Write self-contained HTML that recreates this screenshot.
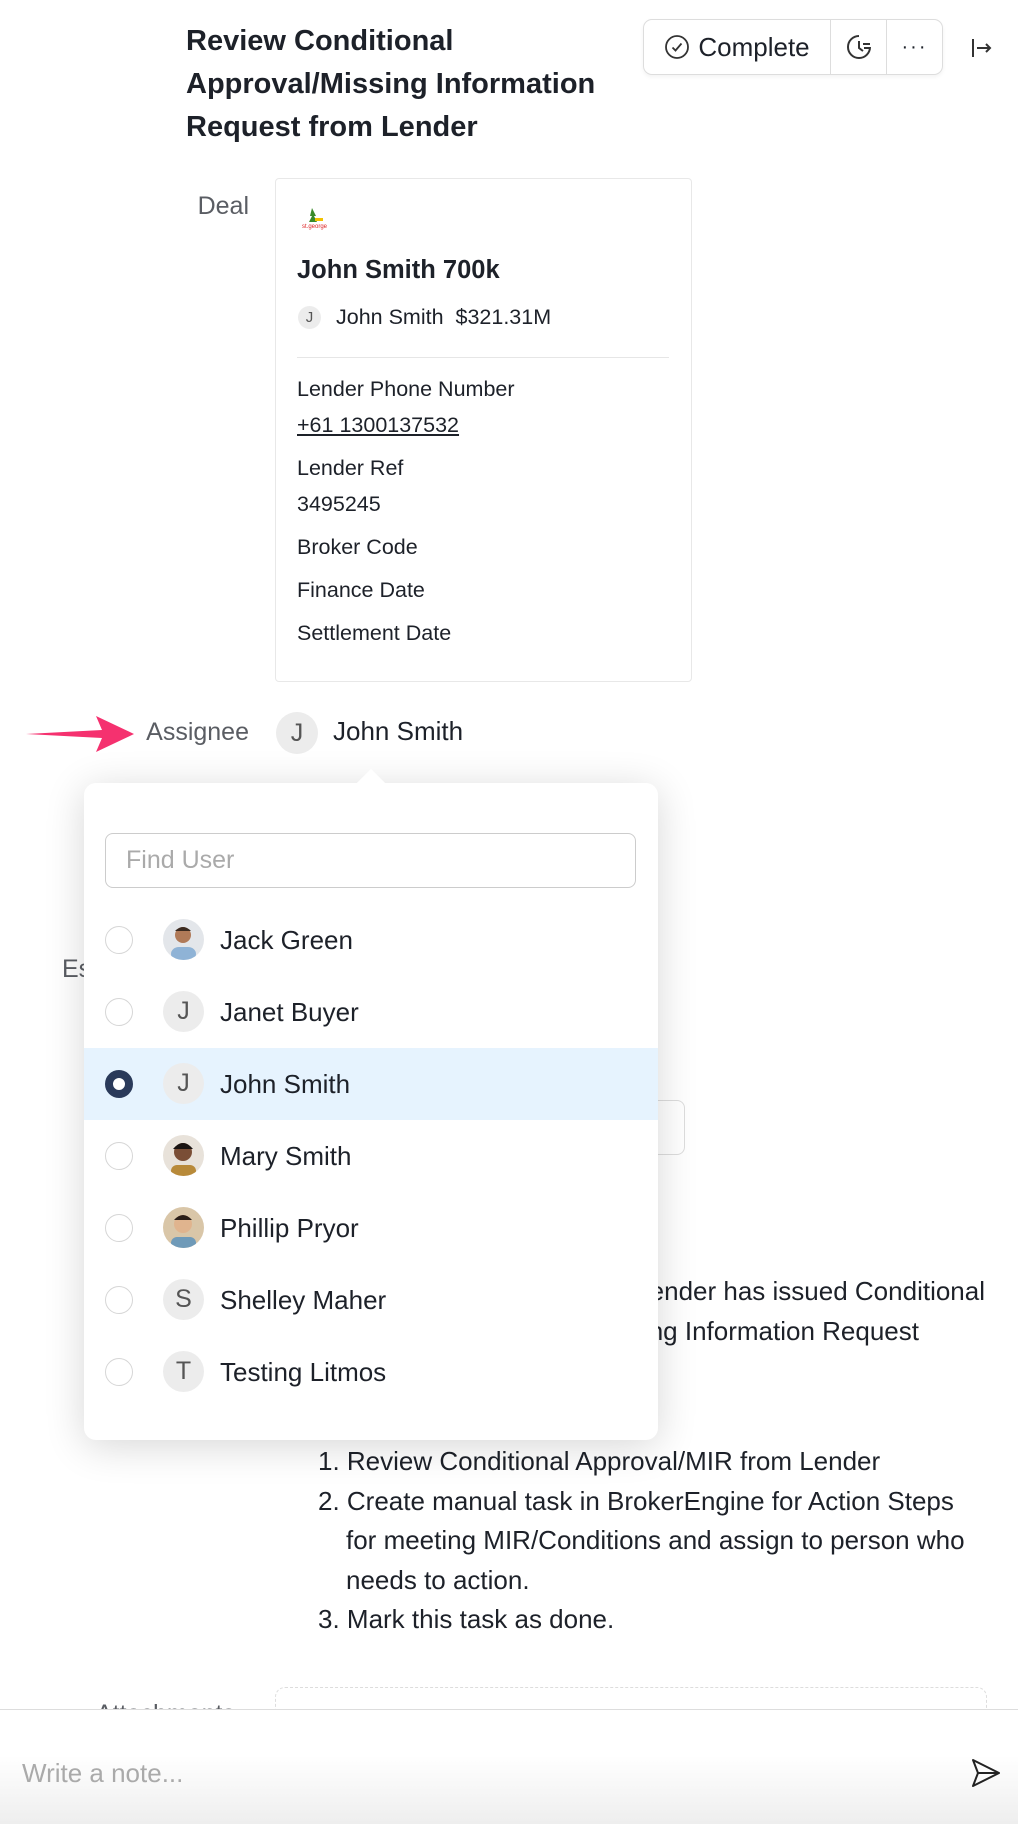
<!DOCTYPE html>
<html><head><meta charset="utf-8"><style>
*{box-sizing:border-box;margin:0;padding:0}
body{width:1018px;height:1824px;position:relative;background:#fff;font-family:"Liberation Sans",sans-serif;color:#1d2129;overflow:hidden}
.a{position:absolute;white-space:nowrap}
.title{left:186px;top:20px;font-size:29px;font-weight:bold;line-height:43px;white-space:normal;width:470px}
.btns{left:643px;top:19px;width:300px;height:56px;border:1px solid #ddd;border-radius:9px;display:flex;box-shadow:0 2px 4px rgba(0,0,0,.05)}
.btns div{display:flex;align-items:center;justify-content:center;border-right:1px solid #ddd}
.lbl{font-size:25px;color:#5a5d63;text-align:right;width:200px}
.card{left:275px;top:178px;width:417px;height:504px;border:1px solid #e8e8e8;border-radius:4px}
.ct{font-size:21.5px;left:297px}
.av{border-radius:50%;background:#ececec;color:#555;display:flex;align-items:center;justify-content:center}
.pop{left:84px;top:783px;width:574px;height:657px;background:#fff;border-radius:12px;box-shadow:0 6px 40px rgba(0,0,0,.16)}
.row{position:absolute;left:0;width:574px;height:72px}
.rad{position:absolute;left:21px;top:22px;width:28px;height:28px;border-radius:50%;border:1.5px solid #d6d6d6}
.rav{position:absolute;left:79px;top:15px;width:41px;height:41px;font-size:25px;overflow:hidden}
.nm{position:absolute;left:136px;top:21px;font-size:26px}
.li{font-size:26px;left:318px}
</style></head><body>
<div class="a title">Review Conditional Approval/Missing Information Request from Lender</div>
<div class="a btns">
 <div style="width:187px;font-size:26px;gap:8px"><svg width="26" height="26" viewBox="0 0 26 26"><circle cx="13" cy="13" r="11" fill="none" stroke="#333" stroke-width="1.8"/><path d="M8.5 13.5l3 3 6-7" fill="none" stroke="#333" stroke-width="1.8"/></svg>Complete</div>
 <div style="width:56px"><svg width="28" height="28" viewBox="0 0 28 28"><path d="M14 3a11 11 0 1 0 11 11" fill="none" stroke="#333" stroke-width="2"/><path d="M14 8v7l4 3" fill="none" stroke="#333" stroke-width="2"/><path d="M18 11h7M19 15h6" stroke="#333" stroke-width="2"/></svg></div>
 <div style="width:55px;border-right:none;font-size:20px;letter-spacing:2px">···</div>
</div>
<svg class="a" style="left:971px;top:37px" width="22" height="22" viewBox="0 0 22 22"><path d="M2 2v18M6 11h13M15 7l4 4-4 4" fill="none" stroke="#333" stroke-width="2"/></svg>

<div class="a lbl" style="left:49px;top:192px">Deal</div>
<div class="a card"></div>
<div class="a" style="left:302px;top:206px;width:28px;height:24px"><svg width="28" height="24"><path d="M10 2l4 8-2 0 3 6h-8l3-6h-2z" fill="#3a8a2a"/><rect x="13" y="12" width="8" height="3" fill="#f2c200"/><text x="0" y="22" font-size="6" fill="#d22" font-family="Liberation Sans">st.george</text></svg></div>
<div class="a ct" style="top:256px;font-size:25.5px;font-weight:bold">John Smith 700k</div>
<div class="a av" style="left:298px;top:306px;width:23px;height:23px;font-size:15px">J</div>
<div class="a ct" style="left:336px;top:305px">John Smith&nbsp;&nbsp;$321.31M</div>
<div class="a" style="left:297px;top:357px;width:372px;height:1px;background:#e6e6e6"></div>
<div class="a ct" style="top:377px">Lender Phone Number</div>
<div class="a ct" style="top:413px;text-decoration:underline">+61 1300137532</div>
<div class="a ct" style="top:456px">Lender Ref</div>
<div class="a ct" style="top:492px">3495245</div>
<div class="a ct" style="top:535px">Broker Code</div>
<div class="a ct" style="top:578px">Finance Date</div>
<div class="a ct" style="top:621px">Settlement Date</div>

<svg class="a" style="left:24px;top:712px" width="112" height="44" viewBox="0 0 112 44"><path d="M2 22 L78 18 L72 4 L110 22 L72 40 L78 26 Z" fill="#f5316f"/></svg>
<div class="a lbl" style="left:49px;top:718px">Assignee</div>
<div class="a av" style="left:276px;top:712px;width:42px;height:42px;font-size:25px">J</div>
<div class="a" style="left:333px;top:716px;font-size:26px">John Smith</div>

<div class="a" style="left:62px;top:955px;font-size:25px;color:#5a5d63">Es</div>
<div class="a" style="left:560px;top:1100px;width:125px;height:55px;border:1px solid #ddd;border-radius:8px"></div>
<div class="a" style="right:33px;top:1276px;font-size:26px">Lender has issued Conditional</div>
<div class="a" style="right:99px;top:1316px;font-size:26px">Approval/Missing Information Request</div>

<div class="a li" style="top:1446px">1. Review Conditional Approval/MIR from Lender</div>
<div class="a li" style="top:1486px">2. Create manual task in BrokerEngine for Action Steps</div>
<div class="a li" style="top:1525px;left:346px">for meeting MIR/Conditions and assign to person who</div>
<div class="a li" style="top:1565px;left:346px">needs to action.</div>
<div class="a li" style="top:1604px">3. Mark this task as done.</div>

<div class="a" style="left:275px;top:1687px;width:712px;height:60px;border:1px dashed #ddd;border-radius:10px"></div>
<div class="a" style="left:96px;top:1700px;font-size:25px;color:#5a5d63">Attachments</div>
<div class="a" style="left:0;top:1709px;width:1018px;height:115px;border-top:1px solid #ddd;background:linear-gradient(#fff 40%,#eee)"></div>
<div class="a" style="left:22px;top:1758px;font-size:26px;color:#aaa">Write a note...</div>
<svg class="a" style="left:970px;top:1757px" width="32" height="32" viewBox="0 0 32 32"><path d="M3 3 L29 16 L3 29 L8 16 Z M8 16 H29" fill="none" stroke="#222" stroke-width="2" stroke-linejoin="round"/></svg>

<div class="a pop">
 <div style="position:absolute;left:277px;top:-10px;width:20px;height:20px;background:#fff;transform:rotate(45deg)"></div>
 <div style="position:absolute;left:21px;top:50px;width:531px;height:55px;border:1px solid #ccc;border-radius:8px;font-size:25px;color:#aaa;padding:12px 20px">Find User</div>
 <div class="row" style="top:121px"><div class="rad"></div><div class="rav av" style="background:#e3e6ea"><svg width="41" height="41"><circle cx="20" cy="16" r="8" fill="#b07a58"/><path d="M12 12q8-8 16 0" fill="#3a2a20"/><rect x="8" y="28" width="25" height="14" rx="8" fill="#8fb3d6"/></svg></div><div class="nm">Jack Green</div></div>
 <div class="row" style="top:193px"><div class="rad"></div><div class="rav av">J</div><div class="nm">Janet Buyer</div></div>
 <div class="row" style="top:265px;background:#e6f3fe"><div class="rad" style="border:8px solid #2a3a5a;background:#fff"></div><div class="rav av">J</div><div class="nm">John Smith</div></div>
 <div class="row" style="top:337px"><div class="rad"></div><div class="rav av" style="background:#e8e2da"><svg width="41" height="41"><circle cx="20" cy="17" r="9" fill="#7a4e36"/><path d="M10 14q10-12 20 0" fill="#1a1412"/><rect x="8" y="30" width="25" height="12" rx="6" fill="#b88a3a"/></svg></div><div class="nm">Mary Smith</div></div>
 <div class="row" style="top:409px"><div class="rad"></div><div class="rav av" style="background:#d9c6a8"><svg width="41" height="41"><circle cx="20" cy="17" r="9" fill="#e0b48e"/><path d="M11 13q9-10 18 0" fill="#2a1e18"/><rect x="8" y="30" width="25" height="12" rx="6" fill="#6f9ab8"/></svg></div><div class="nm">Phillip Pryor</div></div>
 <div class="row" style="top:481px"><div class="rad"></div><div class="rav av">S</div><div class="nm">Shelley Maher</div></div>
 <div class="row" style="top:553px"><div class="rad"></div><div class="rav av">T</div><div class="nm">Testing Litmos</div></div>
</div>
</body></html>
